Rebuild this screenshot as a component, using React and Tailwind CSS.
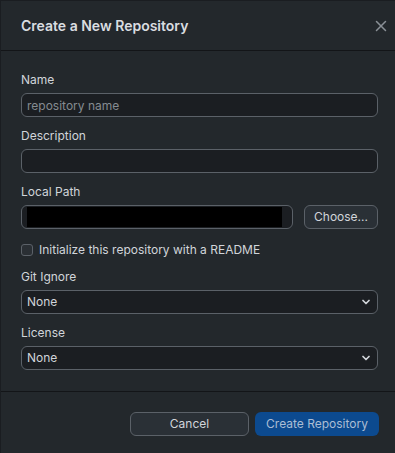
import { X, ChevronDown } from "lucide-react";

const FIELD =
  "h-[24px] w-full rounded-[6px] border border-[#5b6168] bg-[#1b1e22] px-[5px] text-[12px] text-[#d1d5da] outline-none";
const LABEL = "h-[16px] text-[12px] leading-[16px] text-[#d1d5da]";

const Select = ({ value }) => (
  <div className="relative mt-[5px]">
    <div className={`${FIELD} flex items-center`}>{value}</div>
    <ChevronDown
      size={12}
      strokeWidth={3.5}
      className="absolute right-[6px] top-[6px] text-[#d1d5da]"
    />
  </div>
);

export default function App() {
  return (
    <div className="h-[453px] w-[395px] border-l border-t border-[#1a1d21] bg-[#23282c] font-['Inter','Noto_Sans',sans-serif]">
      <div className="flex h-[50px] items-center justify-between border-b border-[#131518] pl-[20px] pr-[5px]">
        <h1 className="text-[14px] font-semibold text-[#dadde0]">
          Create a New Repository
        </h1>
        <X size={18} strokeWidth={2} className="text-[#8a9096]" />
      </div>

      <div className="border-b border-[#131518] pb-[21px] pl-[20px] pr-[17px] pt-[21px]">
        <div className={LABEL}>Name</div>
        <input
          className={`${FIELD} mt-[5px] placeholder:text-[#858b91]`}
          placeholder="repository name"
        />

        <div className={`${LABEL} mt-[11px]`}>Description</div>
        <input className={`${FIELD} mt-[5px]`} />

        <div className={`${LABEL} mt-[11px]`}>Local Path</div>
        <div className="mt-[5px] flex gap-[11px]">
          <div className={`${FIELD} flex flex-1 items-center`}>
            <div className="h-[20px] w-[255px] bg-black" />
          </div>
          <button className="h-[24px] w-[74px] shrink-0 rounded-[6px] border border-[#5b6168] bg-[#2a3036] text-[12px] text-[#d1d5da]">
            Choose...
          </button>
        </div>

        <label className="mt-[13px] flex h-[16px] items-center gap-[6px] text-[12px] text-[#d1d5da]">
          <span className="h-[12px] w-[12px] rounded-[3px] border border-[#5b6168] bg-[#2a2f34]" />
          Initialize this repository with a README
        </label>

        <div className={`${LABEL} mt-[11px]`}>Git Ignore</div>
        <Select value="None" />

        <div className={`${LABEL} mt-[11px]`}>License</div>
        <Select value="None" />
      </div>

      <div className="flex justify-end gap-[6px] pr-[16px] pt-[20px]">
        <button className="h-[24px] w-[119px] rounded-[6px] border border-[#5b6168] bg-[#2a3036] text-[12px] text-[#d1d5da]">
          Cancel
        </button>
        <button className="h-[24px] w-[124px] rounded-[6px] bg-[#0c4a8f] text-[12px] text-[#aabdd4]">
          Create Repository
        </button>
      </div>
    </div>
  );
}
